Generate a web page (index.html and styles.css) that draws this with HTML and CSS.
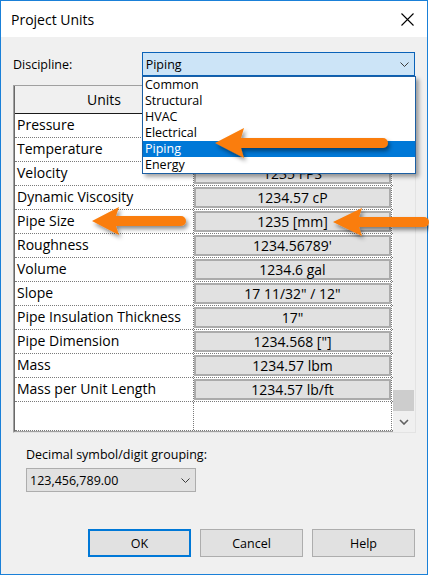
FILE: index.html
```html
<!DOCTYPE html>
<html>
<head>
<meta charset="utf-8">
<link rel="stylesheet" href="styles.css">
</head>
<body>
<div class="window">
  <div class="titlebar">
    <span class="title">Project Units</span>
    <svg class="close" viewBox="0 0 13 13" width="13" height="13"><path d="M0.5 0.5 L12.5 12.5 M12.5 0.5 L0.5 12.5" stroke="#000" stroke-width="1.1" fill="none"/></svg>
  </div>
  <div class="content">
    <div class="discipline-row">
      <span class="label">Discipline:</span>
      <div class="select select-active">
        <span>Piping</span>
        <svg class="chev" viewBox="0 0 9 5" width="9" height="5"><path d="M0.5 0.5 L4.5 4.5 L8.5 0.5" stroke="#3b3b3b" fill="none"/></svg>
      </div>
    </div>

    <div class="grid-frame">
      <div class="grid">
        <div class="row header"><div class="c1">Units</div><div class="c2">Format</div></div>
        <div class="row"><div class="c1">Pressure</div><div class="c2"><div class="val">1234.57 psi</div></div></div>
        <div class="row"><div class="c1">Temperature</div><div class="c2"><div class="val">1234.57 °F</div></div></div>
        <div class="row"><div class="c1">Velocity</div><div class="c2"><div class="val">1235 FPS</div></div></div>
        <div class="row"><div class="c1">Dynamic Viscosity</div><div class="c2"><div class="val">1234.57 cP</div></div></div>
        <div class="row"><div class="c1">Pipe Size</div><div class="c2"><div class="val">1235 [mm]</div></div></div>
        <div class="row"><div class="c1">Roughness</div><div class="c2"><div class="val">1234.56789'</div></div></div>
        <div class="row"><div class="c1">Volume</div><div class="c2"><div class="val">1234.6 gal</div></div></div>
        <div class="row"><div class="c1">Slope</div><div class="c2"><div class="val">17 11/32" / 12"</div></div></div>
        <div class="row"><div class="c1">Pipe Insulation Thickness</div><div class="c2"><div class="val">17"</div></div></div>
        <div class="row"><div class="c1">Pipe Dimension</div><div class="c2"><div class="val">1234.568 ["]</div></div></div>
        <div class="row"><div class="c1">Mass</div><div class="c2"><div class="val">1234.57 lbm</div></div></div>
        <div class="row"><div class="c1">Mass per Unit Length</div><div class="c2"><div class="val">1234.57 lb/ft</div></div></div>
        <div class="row empty"><div class="c1"></div><div class="c2"></div></div>
      </div>
      <div class="scrollbar">
        <div class="sb-btn"><svg viewBox="0 0 10 6" width="10" height="6"><path d="M1 5 L5 1 L9 5" stroke="#606060" stroke-width="1.6" fill="none"/></svg></div>
        <div class="sb-track"><div class="sb-thumb"></div></div>
        <div class="sb-btn"><svg viewBox="0 0 10 6" width="10" height="6"><path d="M1 1 L5 5 L9 1" stroke="#606060" stroke-width="1.6" fill="none"/></svg></div>
      </div>
    </div>

    <div class="decimal">
      <div class="label">Decimal symbol/digit grouping:</div>
      <div class="select select-small">
        <span>123,456,789.00</span>
        <svg class="chev" viewBox="0 0 9 5" width="9" height="5"><path d="M0.5 0.5 L4.5 4.5 L8.5 0.5" stroke="#3b3b3b" fill="none"/></svg>
      </div>
    </div>

    <div class="buttons">
      <div class="btn btn-default">OK</div>
      <div class="btn">Cancel</div>
      <div class="btn">Help</div>
    </div>
  </div>
</div>

<ul class="droplist">
  <li>Common</li>
  <li>Structural</li>
  <li>HVAC</li>
  <li>Electrical</li>
  <li class="sel">Piping</li>
  <li>Energy</li>
</ul>

<svg class="arrows" viewBox="0 0 429 575" width="429" height="575">
  <defs>
    <filter id="sh" x="-20%" y="-50%" width="140%" height="200%">
      <feDropShadow dx="2" dy="3" stdDeviation="2" flood-color="#000" flood-opacity="0.45"/>
    </filter>
  </defs>
  <g fill="#fa7d09" filter="url(#sh)">
    <path d="M215 143 L244 128 L241 138 L383 138 A5 5 0 0 1 383 148 L241 148 L244 158 Z"/>
    <path d="M92 221 L119 207 L116 216 L181 216 A5 5 0 0 1 181 226 L116 226 L119 235 Z"/>
    <path d="M333 222 L362 208 L359 217 L424 217 A5 5 0 0 1 424 227 L359 227 L362 236 Z"/>
  </g>
</svg>
</body>
</html>
```

FILE: styles.css
```css
* { box-sizing: border-box; }

html, body {
  margin: 0;
  padding: 0;
  background: #ffffff;
}

body {
  position: relative;
  width: 429px;
  height: 575px;
  overflow: hidden;
  font-family: "Open Sans", "Noto Sans", sans-serif;
  font-size: 12.5px;
  color: #000;
}

.window {
  width: 428px;
  height: 575px;
  border: 1px solid #1a80d8;
  background: #f0f0f0;
  display: flex;
  flex-direction: column;
}

.titlebar {
  flex: none;
  height: 36px;
  background: #fff;
  display: flex;
  align-items: center;
  justify-content: space-between;
  padding: 0 13px 0 10px;
}

.title {
  font-size: 14px;
}

.close {
  display: block;
}

.content {
  padding: 15px 12px 0 12px;
  display: flex;
  flex-direction: column;
}

.discipline-row {
  display: flex;
  align-items: center;
  height: 24px;
}

.discipline-row .label {
  width: 129px;
}

.select {
  display: flex;
  align-items: center;
  justify-content: space-between;
  height: 24px;
  border: 1px solid #adadad;
  background: #e1e1e1;
  padding: 0 5px 0 3px;
}

.select-active {
  width: 274px;
  background: #cce4f7;
  border-color: #0a62b8;
}

.chev {
  display: block;
}

.grid-frame {
  margin-top: 9px;
  width: 403px;
  height: 348px;
  display: flex;
  border-top: 1px solid #a0a0a0;
  border-left: 1px solid #a0a0a0;
  border-right: 1px solid #e3e3e3;
  border-bottom: 1px solid #e3e3e3;
}

.grid {
  width: 379px;
  background: #fff;
  border-left: 1px solid #696969;
  border-bottom: 1px solid #a0a0a0;
  display: flex;
  flex-direction: column;
}

.row {
  display: flex;
  height: 24px;
  border-bottom: 1px dotted #7a7a7a;
  font-size: 14px;
}

.row .c1 {
  width: 179px;
  border-right: 1px dotted #7a7a7a;
  padding-left: 2px;
  line-height: 22px;
  white-space: nowrap;
}

.row .c2 {
  width: 198px;
  border-right: 1px dotted #7a7a7a;
  padding: 1px 0;
}

.row.header {
  height: 28px;
  background: #f0f0f0;
  border-bottom: 1px solid #1a1a1a;
}

.row.header .c1,
.row.header .c2 {
  line-height: 27px;
  text-align: center;
  border-right: 1px solid #e0e0e0;
  padding: 0;
}

.row.empty {
  height: 29px;
}

.val {
  height: 21px;
  background: #e1e1e1;
  border: 2px solid #ababab;
  text-align: center;
  line-height: 17px;
  white-space: nowrap;
}

.scrollbar {
  width: 22px;
  display: flex;
  flex-direction: column;
  background: #f0f0f0;
}

.sb-btn {
  height: 21px;
  display: flex;
  align-items: center;
  justify-content: center;
  padding-right: 1px;
}

.sb-track {
  flex: 1;
  display: flex;
  flex-direction: column;
  justify-content: flex-end;
}

.sb-thumb {
  height: 21px;
  width: 21px;
  background: #cdcdcd;
}

.decimal {
  margin-left: 13px;
  margin-top: 14px;
}

.decimal .label {
  line-height: 16px;
}

.select-small {
  margin-top: 5px;
  width: 170px;
}

.buttons {
  margin-top: 37px;
  display: flex;
  justify-content: flex-end;
  gap: 9px;
}

.btn {
  width: 103px;
  height: 28px;
  background: #e1e1e1;
  border: 1px solid #adadad;
  display: flex;
  align-items: center;
  justify-content: center;
}

.btn-default {
  border: 2px solid #0078d7;
}

.droplist {
  position: absolute;
  left: 142px;
  top: 76px;
  width: 274px;
  margin: 0;
  padding: 0;
  list-style: none;
  background: #fff;
  border: 1px solid #1c5fa3;
  box-shadow: 3px 3px 4px rgba(0, 0, 0, 0.35);
}

.droplist li {
  height: 16px;
  line-height: 16px;
  padding-left: 2px;
}

.droplist li.sel {
  background: #0078d7;
  color: #fff;
}

.arrows {
  position: absolute;
  left: 0;
  top: 0;
  pointer-events: none;
}
```
